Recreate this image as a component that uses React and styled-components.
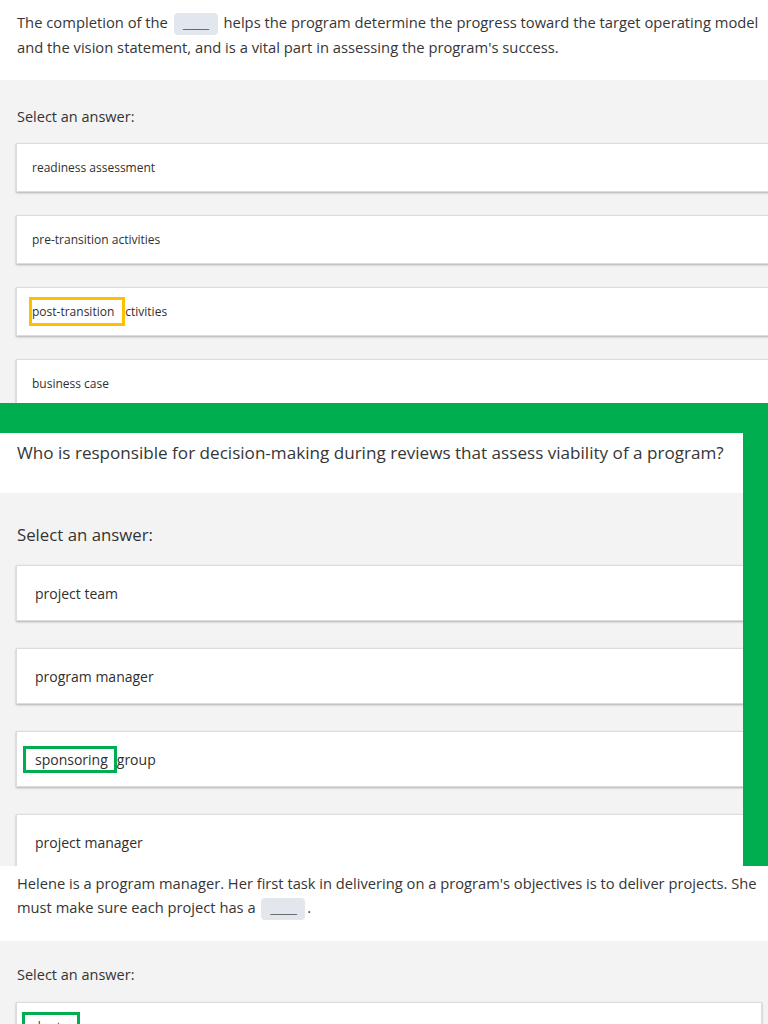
import styled, { createGlobalStyle } from 'styled-components';

const GlobalStyle = createGlobalStyle`
  html, body {
    margin: 0;
    padding: 0;
    background: #ffffff;
  }
  body {
    font-family: 'Open Sans', 'Noto Sans', Arial, sans-serif;
    color: #333333;
  }
`;

const sizes = {
  small: {
    prompt: 14.75,
    promptPad: '10px 4px 21px 17px',
    label: 14.5,
    labelPad: '27px 0 16px 17px',
    option: 12,
    cardHeight: 49,
    cardGap: 23,
    optionPad: 15,
  },
  large: {
    prompt: 17.1,
    promptPad: '8px 4px 28px 17px',
    label: 16.8,
    labelPad: '30px 0 18px 17px',
    option: 14,
    cardHeight: 56,
    cardGap: 27,
    optionPad: 18,
  },
};

const Page = styled.div`
  display: flex;
  flex-direction: column;
  width: 768px;
  height: 1024px;
  overflow: hidden;
`;

const QuestionBlock = styled.section`
  display: flex;
  flex-direction: column;
  height: ${(p) => (p.$height ? `${p.$height}px` : 'auto')};
  flex-shrink: 0;
  overflow: hidden;
  background: #f3f3f3;
`;

const Prompt = styled.p`
  margin: 0;
  background: #ffffff;
  padding: ${(p) => sizes[p.$size].promptPad};
  font-size: ${(p) => p.$font || sizes[p.$size].prompt}px;
  line-height: 24px;
  color: #363636;
`;

const Blank = styled.span`
  display: inline-block;
  width: 44px;
  height: 22px;
  line-height: 20px;
  margin: 0 2px;
  border-radius: 4px;
  background: #e2e7ee;
  color: #555;
  text-align: center;
  font-size: 13px;
  letter-spacing: -0.5px;
`;

const AnswerArea = styled.div`
  display: flex;
  flex-direction: column;
`;

const Label = styled.div`
  padding: ${(p) => sizes[p.$size].labelPad};
  font-size: ${(p) => sizes[p.$size].label}px;
  line-height: ${(p) => (p.$size === 'large' ? 24 : 20)}px;
  color: #333;
`;

const OptionList = styled.div`
  display: flex;
  flex-direction: column;
  gap: ${(p) => sizes[p.$size].cardGap}px;
  margin-left: 16px;
  margin-right: ${(p) => p.$right ?? -4}px;
`;

const OptionCard = styled.div`
  display: flex;
  align-items: center;
  flex-shrink: 0;
  height: ${(p) => sizes[p.$size].cardHeight}px;
  box-sizing: border-box;
  padding-left: ${(p) => sizes[p.$size].optionPad}px;
  background: #ffffff;
  border: 1px solid #dcdcdc;
  box-shadow: 0 1px 2px rgba(0, 0, 0, 0.28);
  font-size: ${(p) => sizes[p.$size].option}px;
  color: #2f2f2f;
  white-space: nowrap;
`;

const Highlight = styled.span`
  display: inline-block;
  border: 3px solid ${(p) => p.$color};
  background: #ffffff;
  margin-left: ${(p) => -p.$left - 3}px;
  padding: ${(p) => p.$pad || '3px 8px 3px 0'};
  line-height: 17px;
`;

const GreenFrame = styled.div`
  display: flex;
  flex-direction: column;
  flex-shrink: 0;
  background: #00ae4f;
  padding: 30px 25px 0 0;
`;

function Option({ size, children }) {
  return <OptionCard $size={size}>{children}</OptionCard>;
}

export default function App() {
  return (
    <>
      <GlobalStyle />
      <Page>
        <QuestionBlock $height={403}>
          <Prompt $size="small">
            The completion of the <Blank>_____</Blank> helps the program determine the progress toward the target operating model and the vision statement, and is a vital part in assessing the program's success.
          </Prompt>
          <AnswerArea>
            <Label $size="small">Select an answer:</Label>
            <OptionList $size="small">
              <Option size="small">readiness assessment</Option>
              <Option size="small">pre-transition activities</Option>
              <Option size="small">
                <Highlight $color="#ffc000" $left={0}>post-transition</Highlight>
                ctivities
              </Option>
              <Option size="small">business case</Option>
            </OptionList>
          </AnswerArea>
        </QuestionBlock>

        <GreenFrame>
          <QuestionBlock $height={433}>
            <Prompt $size="large">
              Who is responsible for decision-making during reviews that assess viability of a program?
            </Prompt>
            <AnswerArea>
              <Label $size="large">Select an answer:</Label>
              <OptionList $size="large">
                <Option size="large">project team</Option>
                <Option size="large">program manager</Option>
                <Option size="large">
                  <Highlight $color="#00ae4f" $left={9} $pad="2px 6px 2px 9px">sponsoring</Highlight>
                  group
                </Option>
                <Option size="large">project manager</Option>
              </OptionList>
            </AnswerArea>
          </QuestionBlock>
        </GreenFrame>

        <QuestionBlock>
          <Prompt $size="small" $font={14.7} style={{ paddingTop: 5 }}>
            Helene is a program manager. Her first task in delivering on a program's objectives is to deliver projects. She must make sure each project has a <Blank>_____</Blank>.
          </Prompt>
          <AnswerArea>
            <Label $size="small" style={{ paddingTop: 24, paddingBottom: 17 }}>Select an answer:</Label>
            <OptionList $size="small" $right={6}>
              <Option size="small">
                <Highlight $color="#00ae4f" $left={7} $pad="3px 4px 3px 7px">charter</Highlight>
              </Option>
            </OptionList>
          </AnswerArea>
        </QuestionBlock>
      </Page>
    </>
  );
}
